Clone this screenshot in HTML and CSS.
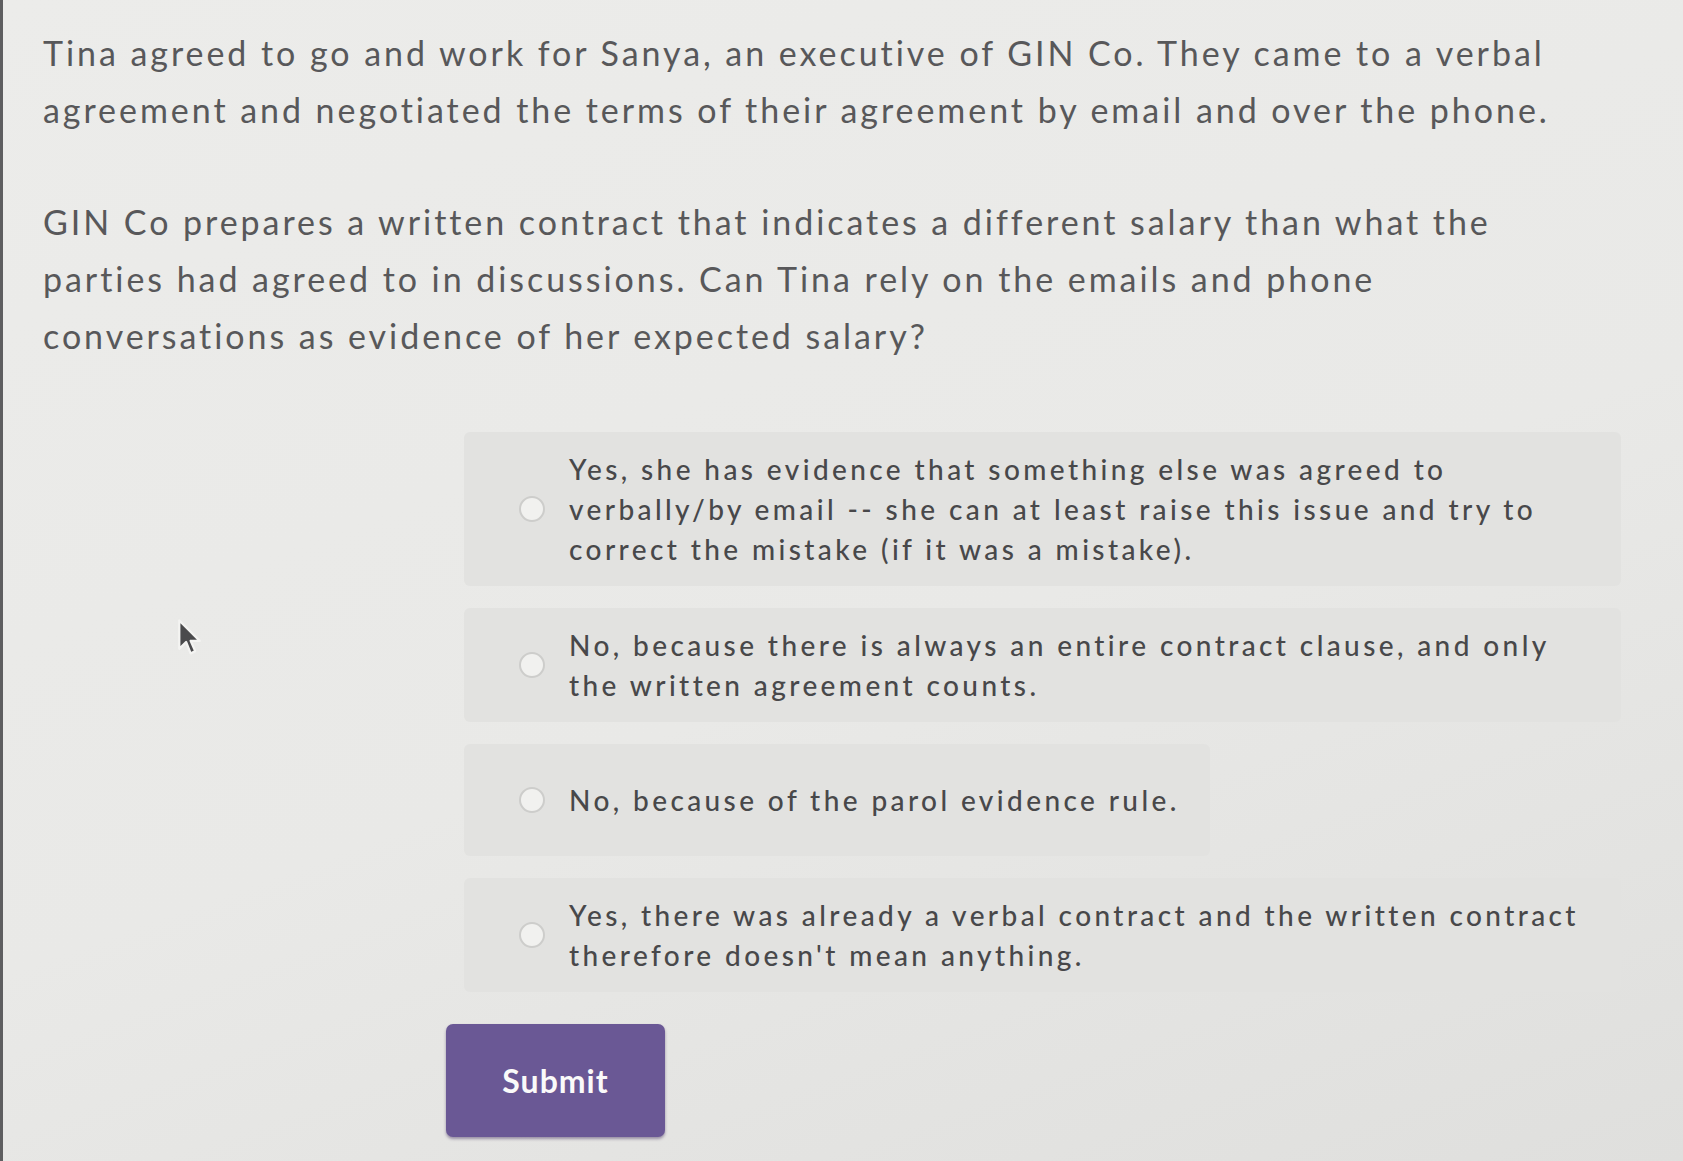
FILE: index.html
```html
<!DOCTYPE html>
<html lang="en">
<head>
    <meta charset="UTF-8">
    <meta name="viewport" content="width=device-width, initial-scale=1.0">
    <title>Question</title>
    <link rel="stylesheet" href="styles.css">
</head>
<body>

    <!-- Question -->
    <div class="question">
        <p>Tina agreed to go and work for Sanya, an executive of GIN Co. They came to a verbal<br>
        agreement and negotiated the terms of their agreement by email and over the phone.</p>
        <p>GIN Co prepares a written contract that indicates a different salary than what the<br>
        parties had agreed to in discussions. Can Tina rely on the emails and phone<br>
        conversations as evidence of her expected salary?</p>
    </div>

    <!-- Answers -->
    <form class="answers">
        <label class="option">
            <input type="radio" name="answer">
            <span class="option-text">Yes, she has evidence that something else was agreed to<br>
            verbally/by email -- she can at least raise this issue and try to<br>
            correct the mistake (if it was a mistake).</span>
        </label>
        <label class="option">
            <input type="radio" name="answer">
            <span class="option-text">No, because there is always an entire contract clause, and only<br>
            the written agreement counts.</span>
        </label>
        <label class="option fit">
            <input type="radio" name="answer">
            <span class="option-text">No, because of the parol evidence rule.</span>
        </label>
        <label class="option">
            <input type="radio" name="answer">
            <span class="option-text">Yes, there was already a verbal contract and the written contract<br>
            therefore doesn't mean anything.</span>
        </label>

        <button type="button" class="btn">Submit</button>
    </form>

    <!-- Mouse pointer left on screen -->
    <svg class="pointer" width="25" height="39" viewBox="0 0 22 34">
        <path d="M2 2 L2 27 L8 21 L12 31 L16 29 L12 20 L20 20 Z" fill="#4a4a4c" stroke="#f4f4f2" stroke-width="2" stroke-linejoin="round"/>
    </svg>

</body>
</html>
```

FILE: styles.css
```css
* {
    margin: 0;
    padding: 0;
    box-sizing: border-box;
}

html, body {
    height: 100%;
}

body {
    font-family: 'Lato', 'Open Sans', sans-serif;
    background: linear-gradient(160deg, #ececea 0%, #e9e9e7 55%, #dfdfdd 100%);
    border-left: 3px solid #5e5e60;
    color: #58585a;
    position: relative;
    overflow: hidden;
}

.question {
    padding: 24px 0 0 40px;
}

.question p {
    font-size: 34px;
    line-height: 57px;
    letter-spacing: 2.95px;
    white-space: nowrap;
}

.question p + p {
    margin-top: 55px;
}

.answers {
    display: flex;
    flex-direction: column;
    align-items: flex-start;
    gap: 22px;
    margin: 68px 0 0 461px;
}

.option {
    display: flex;
    align-items: center;
    gap: 24px;
    width: 1157px;
    min-height: 112px;
    padding: 17px 40px 17px 55px;
    background-color: #e2e2e0;
    border-radius: 6px;
    cursor: pointer;
}

.option.fit {
    width: auto;
    padding-right: 30px;
}

.option input {
    appearance: none;
    flex: 0 0 26px;
    width: 26px;
    height: 26px;
    border: 2px solid #cdcdcb;
    border-radius: 50%;
    background-color: #f1f1ef;
}

.option-text {
    font-size: 28px;
    font-weight: 500;
    line-height: 40px;
    letter-spacing: 3.4px;
    color: #48484a;
    white-space: nowrap;
}

.btn {
    margin: 10px 0 0 -18px;
    width: 219px;
    height: 113px;
    background-color: #6a5895;
    color: #fafafa;
    border: none;
    border-radius: 7px;
    font-family: 'Lato', sans-serif;
    font-size: 32px;
    font-weight: 700;
    letter-spacing: 1px;
    cursor: pointer;
    box-shadow: 0 2px 3px rgba(60, 40, 90, 0.45);
}

.pointer {
    position: absolute;
    left: 174px;
    top: 618px;
}
```
